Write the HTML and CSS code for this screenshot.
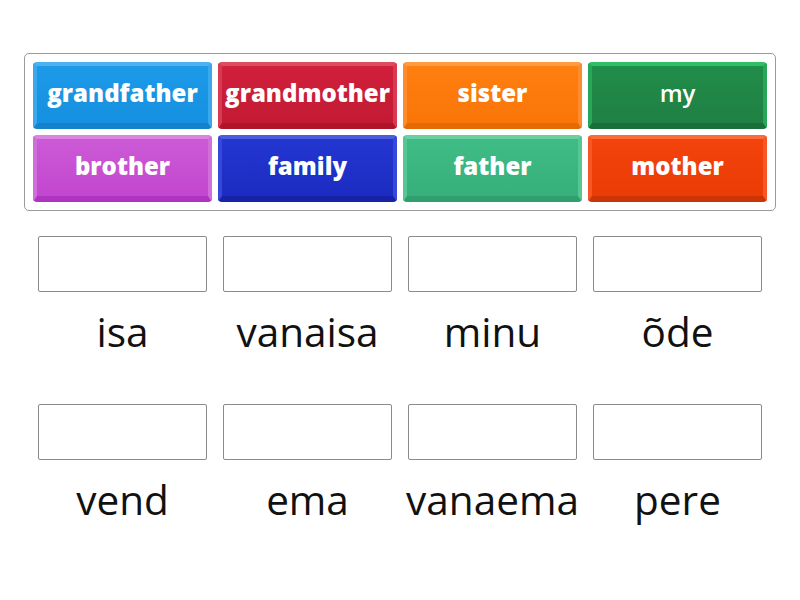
FILE: index.html
```html
<!DOCTYPE html>
<html>
<head>
<meta charset="utf-8">
<link rel="stylesheet" href="styles.css">
</head>
<body>
<div class="page">
  <div class="bank">
    <div class="tile c-blue"><span>grandfather</span></div>
    <div class="tile c-red"><span>grandmother</span></div>
    <div class="tile c-orange"><span>sister</span></div>
    <div class="tile c-green semi"><span>my</span></div>
    <div class="tile c-purple"><span>brother</span></div>
    <div class="tile c-navy"><span>family</span></div>
    <div class="tile c-teal"><span>father</span></div>
    <div class="tile c-redorange"><span>mother</span></div>
  </div>
  <div class="targets">
    <div class="cell"><div class="drop"></div><div class="label">isa</div></div>
    <div class="cell"><div class="drop"></div><div class="label">vanaisa</div></div>
    <div class="cell"><div class="drop"></div><div class="label">minu</div></div>
    <div class="cell"><div class="drop"></div><div class="label">õde</div></div>
    <div class="cell"><div class="drop"></div><div class="label">vend</div></div>
    <div class="cell"><div class="drop"></div><div class="label">ema</div></div>
    <div class="cell"><div class="drop"></div><div class="label">vanaema</div></div>
    <div class="cell"><div class="drop"></div><div class="label">pere</div></div>
  </div>
</div>
</body>
</html>
```

FILE: styles.css
```css
html, body {
  margin: 0;
  padding: 0;
  background: #ffffff;
  font-family: "Open Sans", "Liberation Sans", sans-serif;
}

.page {
  width: 800px;
  height: 600px;
  padding: 53px 24px 0 24px;
  box-sizing: border-box;
}

.bank {
  border: 1px solid #9a9a9a;
  border-radius: 5px;
  padding: 8px;
  display: grid;
  grid-template-columns: repeat(4, 179px);
  grid-auto-rows: 67px;
  gap: 6px;
}

.tile {
  border-radius: 4px;
  border-style: solid;
  border-width: 4px 4px 6px 4px;
  display: flex;
  align-items: center;
  justify-content: center;
  color: #ffffff;
  font-weight: 800;
  font-size: 24px;
  box-sizing: border-box;
}

.tile.semi {
  font-weight: 600;
}

.tile span {
  margin-top: -5px;
}

.c-blue { background: linear-gradient(#1c9ae8, #1690e0); border-color: #4cb2f0 #3aa8ee #1482cc #3aa8ee; }
.c-red { background: linear-gradient(#d0203b, #c31a33); border-color: #de4c5f #d83a50 #b0142b #d83a50; }
.c-orange { background: linear-gradient(#ff7f10, #f97508); border-color: #ff9a45 #ff8c2c #e46a04 #ff8c2c; }
.c-green { background: linear-gradient(#218d4a, #1f8043); border-color: #2dc065 #27a758 #1a6e39 #27a758; }
.c-purple { background: linear-gradient(#cc5ad6, #c247cf); border-color: #da85e2 #d16fda #b034c2 #d16fda; }
.c-navy { background: linear-gradient(#2336d0, #1c2cc2); border-color: #4a5be0 #3648da #1622a8 #3648da; }
.c-teal { background: linear-gradient(#3fbc85, #37b07b); border-color: #6ccfa1 #56c693 #2f9f6d #56c693; }
.c-redorange { background: linear-gradient(#f4430c, #ea3c06); border-color: #fb6b3c #f75625 #cc3404 #f75625; }

.targets {
  display: grid;
  grid-template-columns: repeat(4, 179px);
  column-gap: 6px;
  row-gap: 0;
  padding: 25px 9px 0 9px;
}

.cell {
  display: flex;
  flex-direction: column;
  align-items: center;
  height: 168px;
}

.drop {
  width: 169px;
  height: 56px;
  border: 1px solid #8a8a8a;
  border-radius: 2px;
  box-sizing: border-box;
  background: #ffffff;
}

.label {
  margin-top: 15px;
  font-size: 40.5px;
  line-height: 50px;
  color: #111111;
  white-space: nowrap;
}
```
